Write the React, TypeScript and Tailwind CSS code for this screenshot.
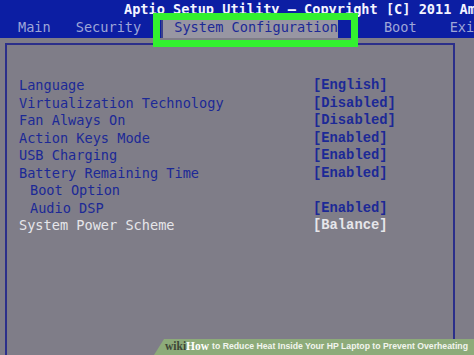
const rows: { label: string; value?: string; indent?: boolean; dim?: boolean }[] = [
  { label: 'Language', value: '[English]' },
  { label: 'Virtualization Technology', value: '[Disabled]' },
  { label: 'Fan Always On', value: '[Disabled]' },
  { label: 'Action Keys Mode', value: '[Enabled]' },
  { label: 'USB Charging', value: '[Enabled]' },
  { label: 'Battery Remaining Time', value: '[Enabled]' },
  { label: 'Boot Option', indent: true },
  { label: 'Audio DSP', value: '[Enabled]', indent: true },
  { label: 'System Power Scheme', value: '[Balance]', dim: true },
]

const App = () => {
  return (
    <div className="relative w-[474px] h-[355px] overflow-hidden bg-[#7f7d88] font-['DejaVu_Sans_Mono',monospace] text-[13.6px]">
      {/* Header */}
      <div className="h-[38px] bg-[#0c1ea3]">
        <div className="h-[17px] pl-[124px] pt-[2px] leading-[14px] whitespace-nowrap text-[#f4f4ff] font-bold">
          Aptio Setup Utility – Copyright [C] 2011 American Megatrends
        </div>
        <div className="flex h-[21px] items-stretch whitespace-nowrap text-[#9ea6d8] leading-[18px]">
          <div className="pl-[18px] pt-[1px]">Main</div>
          <div className="pl-[25px] pt-[1px]">Security</div>
          <div className="ml-[20px] w-[190px] bg-[#9896a2] border-l-2 border-[#3a3f8c] pl-[11px] pt-[1px] text-[#1c2996]">
            System Configuration
          </div>
          <div className="pl-[46px] pt-[1px]">Boot</div>
          <div className="pl-[33px] pt-[1px]">Exit</div>
        </div>
      </div>

      {/* Body frame */}
      <div className="flex pt-[5px]">
        <div className="ml-[5px] w-[450px] h-[320px] border-l-2 border-t-2 border-r-2 border-[#2b2f8a] pl-[12px] pt-[32px]">
          {rows.map((r) => (
            <div key={r.label} className={`flex h-[17.5px] leading-[17.5px] whitespace-nowrap ${r.dim ? 'text-[#e6e6ea]' : 'text-[#1c2996]'}`}>
              <div className={`w-[294px] ${r.indent ? 'pl-[11px]' : ''}`}>{r.label}</div>
              <div className="font-['Liberation_Mono',monospace] font-bold text-[13.8px]">{r.value}</div>
            </div>
          ))}
        </div>
      </div>

      {/* Green highlight around selected tab */}
      <div className="absolute left-[153px] top-[13px] w-[205px] h-[34px] border-[7px] border-[#33f02f]" />

      {/* wikiHow caption */}
      <div className="absolute right-0 bottom-0 w-[320px] h-[16px] bg-[#8dab7a] [clip-path:polygon(10px_0,100%_0,100%_100%,0_100%)] flex items-center pl-[11px] whitespace-nowrap font-['Liberation_Sans',sans-serif] font-bold text-[8.7px] text-[#f2f5ee]">
        <span className="font-['Liberation_Serif',serif] text-[11.5px] text-[#3d4636]">wiki</span>
        <span className="font-['Liberation_Serif',serif] text-[11.5px] text-white mr-[3px]">How</span>
        to Reduce Heat Inside Your HP Laptop to Prevent Overheating
      </div>
    </div>
  )
}

export default App
